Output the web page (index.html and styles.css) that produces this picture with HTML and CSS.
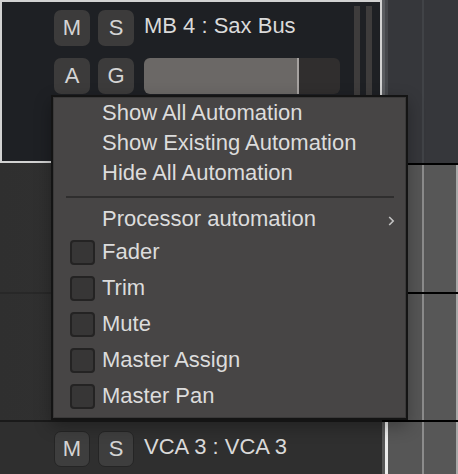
FILE: index.html
```html
<!DOCTYPE html>
<html>
<head>
<meta charset="utf-8">
<link rel="stylesheet" href="styles.css">
</head>
<body>
<div class="tracks">
  <div class="track track-sel">
    <div class="hdr hdr-sel">
      <div class="ctrls">
        <div class="ctrl-row">
          <span class="btn">M</span><span class="btn">S</span><span class="name">MB 4 : Sax Bus</span>
        </div>
        <div class="ctrl-row">
          <span class="btn">A</span><span class="btn">G</span>
          <div class="fader"><div class="fader-fill"></div><div class="fader-rest"></div></div>
        </div>
      </div>
      <div class="meters"><span class="meter"></span><span class="meter"></span></div>
    </div>
    <div class="lane lane-dark"><span class="s1"></span><span class="s2"></span><span class="lm"></span><span class="ld"></span><span class="lr"></span></div>
  </div>
  <div class="track track-2">
    <div class="hdr hdr-plain"></div>
    <div class="lane lane-gray"><span class="s1"></span><span class="s2"></span><span class="lm"></span><span class="ld"></span><span class="lr"></span></div>
  </div>
  <div class="track track-3">
    <div class="hdr hdr-plain hdr-top"></div>
    <div class="lane lane-gray"><span class="s1"></span><span class="s2"></span><span class="lm"></span><span class="ld"></span><span class="lr"></span></div>
  </div>
  <div class="track track-4">
    <div class="hdr hdr-vca">
      <div class="ctrl-row">
        <span class="btn btn-vca">M</span><span class="btn btn-vca">S</span><span class="name">VCA 3 : VCA 3</span>
      </div>
    </div>
    <div class="lane lane-gray"><span class="s1"></span><span class="s2"></span><span class="lm"></span><span class="ld"></span><span class="lr"></span></div>
  </div>
</div>

<div class="menu">
  <div class="mi">Show All Automation</div>
  <div class="mi">Show Existing Automation</div>
  <div class="mi">Hide All Automation</div>
  <div class="sep"></div>
  <div class="mi mi-sub"><span>Processor automation</span><svg class="chev" width="7" height="10" viewBox="0 0 7 10"><path d="M1.2 1 L5.2 5 L1.2 9" fill="none" stroke="#c4c4c4" stroke-width="1.6"/></svg></div>
  <div class="mc"><span class="box"></span><span>Fader</span></div>
  <div class="mc"><span class="box"></span><span>Trim</span></div>
  <div class="mc"><span class="box"></span><span>Mute</span></div>
  <div class="mc"><span class="box"></span><span>Master Assign</span></div>
  <div class="mc"><span class="box"></span><span>Master Pan</span></div>
</div>
</body>
</html>
```

FILE: styles.css
```css
* { box-sizing: border-box; }
html, body { margin: 0; padding: 0; }
body {
  width: 458px;
  height: 474px;
  overflow: hidden;
  position: relative;
  background: #2f2f2f;
  font-family: "Liberation Sans", Arial, Helvetica, sans-serif;
}
.tracks { display: flex; flex-direction: column; height: 474px; }
.track { display: flex; flex: none; }
.track-sel { height: 163px; }
.track-2 { height: 129px; }
.track-3 { height: 128px; }
.track-4 { flex: 1; }

.hdr { width: 382px; flex: none; }
.hdr-sel {
  border: 2px solid #d2d2d2;
  background: #1e2024;
  display: flex;
  padding: 8px 8px 0 52px;
}
.hdr-plain { background: linear-gradient(to right, #2f2f2f, #353535); }
.hdr-top { border-top: 2px solid #282828; }
.hdr-vca {
  background: #2f2f2f;
  border-top: 2px solid #1a1a1a;
  padding: 9px 0 0 54px;
}

.ctrls { display: flex; flex-direction: column; gap: 12px; }
.ctrl-row { display: flex; align-items: center; gap: 8px; }
.btn {
  width: 36px;
  height: 36px;
  border-radius: 7px;
  background: #3c3b3b;
  color: #d4d4d4;
  font-size: 22px;
  display: flex;
  align-items: center;
  justify-content: center;
  flex: none;
}
.btn-vca { background: #3e3e3e; border: 1px solid #252525; }
.name {
  align-self: flex-start;
  line-height: 32px;
  font-size: 22px;
  color: #dadada;
  margin-left: 2px;
  white-space: nowrap;
}
.fader {
  width: 196px;
  height: 36px;
  margin-left: 2px;
  display: flex;
}
.fader-fill {
  width: 155px;
  background: #6b6866;
  border-radius: 6px 0 0 6px;
  border-right: 2px solid #a6a2a0;
}
.fader-rest { flex: 1; background: #302e2e; border-radius: 0 6px 6px 0; }

.meters { margin-left: auto; margin-top: -4px; display: flex; gap: 6px; }
.meter { width: 6px; background: #3e3c3c; }

.lane { flex: 1; display: flex; }
.lane span { display: block; }
.s1 { width: 3px; }
.s2 { width: 3px; }
.lm { width: 34px; }
.ld { width: 2px; }
.lr { flex: 1; }
.lane-dark .s1 { background: #5b5d61; }
.lane-dark .s2 { background: #46484c; }
.lane-dark .lm, .lane-dark .lr { background: #36373b; }
.lane-dark .ld { background: #414347; }
.lane-gray { border-top: 2px solid #000; }
.lane-gray .s1 { background: #575757; }
.lane-gray .s2 { background: #ececec; }
.lane-gray .lm { background: #565656; }
.lane-gray .ld { background: #8c8c8c; }
.lane-gray .lr { background: #575757; border-right: 2px solid #a8a8a8; }

.menu {
  position: absolute;
  left: 51px;
  top: 95px;
  width: 357px;
  height: 325px;
  background: #474545;
  border: 2px solid #141414;
  box-shadow: inset 0 0 0 1px #3a3939, 0 6px 16px rgba(0, 0, 0, 0.3);
  padding-top: 1px;
  color: #dcdcdc;
  font-size: 22px;
}
.mi { line-height: 30px; padding-left: 49px; white-space: nowrap; }
.sep { height: 2px; background: #2f2e2e; margin: 8px 12px 6px 13px; }
.mi-sub { display: flex; justify-content: space-between; align-items: center; padding-right: 11px; }
.chev { margin-top: 4px; }
.mc {
  height: 36px;
  line-height: 36px;
  display: flex;
  align-items: center;
  gap: 7px;
  padding-left: 17px;
}
.box {
  width: 25px;
  height: 25px;
  border: 2px solid #242323;
  border-radius: 4px;
  background: #373636;
  flex: none;
}
```
